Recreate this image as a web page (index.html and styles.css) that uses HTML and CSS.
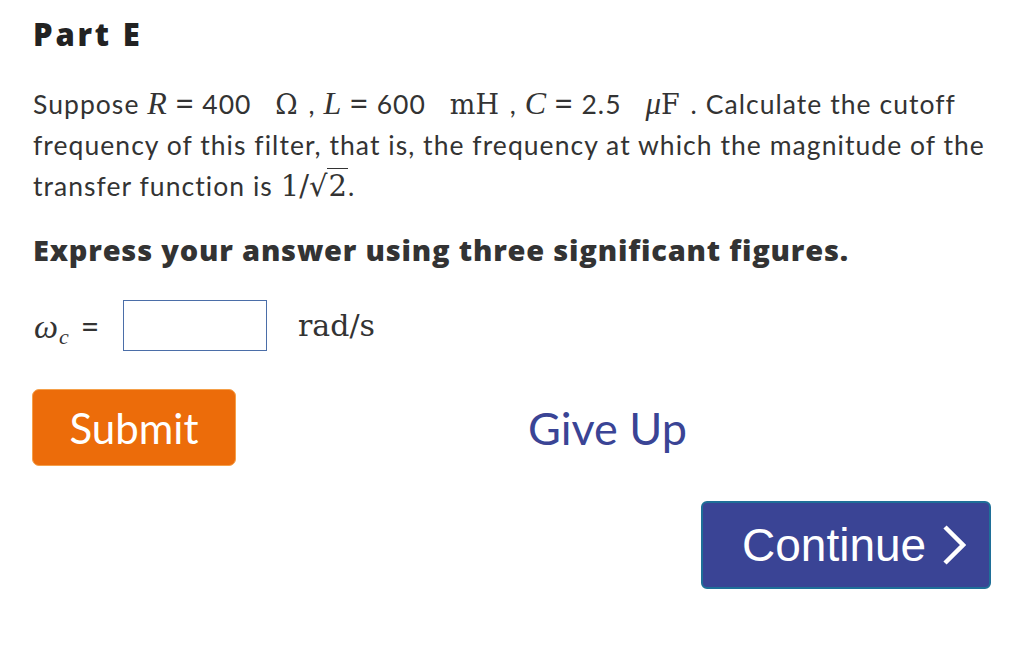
FILE: index.html
```html
<!DOCTYPE html>
<html>
<head>
<meta charset="utf-8">
<link rel="stylesheet" href="styles.css">
</head>
<body>
<main class="part">
  <h1 class="title">Part E</h1>
  <p class="prompt">Suppose <span class="mi">R</span> <span class="op">=</span> 400 <span class="mu">Ω</span> , <span class="mi">L</span> <span class="op">=</span> 600 <span class="mu">mH</span> , <span class="mi">C</span> <span class="op">=</span> 2.5 <span class="mu"><i class="mu-i">μ</i>F</span> . Calculate the cutoff frequency of this filter, that is, the frequency at which the magnitude of the transfer function is <span class="frac">1/<span class="sqrt">√<span class="rad">2</span></span></span>.</p>
  <p class="instr">Express your answer using three significant figures.</p>
  <div class="answer">
    <span class="lhs"><span class="mi omega">ω</span><sub class="mi sub">c</sub><span class="eq">=</span></span>
    <span class="input"></span>
    <span class="unit">rad/s</span>
  </div>
  <div class="actions">
    <button class="submit">Submit</button>
    <a class="giveup">Give Up</a>
  </div>
  <div class="next">
    <button class="continue">Continue <svg class="chev" width="24" height="40" viewBox="0 0 24 40"><path d="M3 2 L21 20 L3 38" fill="none" stroke="#fff" stroke-width="4.5"/></svg></button>
  </div>
</main>
</body>
</html>
```
FILE: styles.css
```css
html, body { margin: 0; padding: 0; background: #fff; }
body { font-family: Lato, "Open Sans", sans-serif; color: #333; }
.part { padding: 0 33px; }
.title { font-family: "Open Sans", Lato, sans-serif; font-weight: 800; font-size: 31px; margin: 0; padding-top: 14px; line-height: 40px; letter-spacing: 2.8px; color: #222; }
.prompt { font-size: 26.5px; line-height: 41px; margin: 29px 0 0 0; letter-spacing: 1.05px; }
.op { font-size: 34px; letter-spacing: 0; vertical-align: -2px; line-height: 1; }
.mi { font-family: "Liberation Serif", "DejaVu Serif", serif; font-style: italic; font-size: 32px; letter-spacing: 0; }
.mu { font-family: "DejaVu Serif", "Liberation Serif", serif; font-size: 27px; letter-spacing: 0; margin-left: 16px; margin-right: 3px; }
.mu-i { font-family: "Liberation Serif", serif; font-size: 31px; }
.frac { font-family: "DejaVu Serif", "Liberation Serif", serif; font-size: 29px; letter-spacing: 0; }
.rad { border-top: 1.5px solid #333; padding: 0 1px; }
.instr { font-family: "Open Sans", Lato, sans-serif; font-weight: 800; font-size: 29px; margin: 25px 0 0 0; line-height: 36px; color: #333; letter-spacing: 0.8px; }
.answer { display: flex; align-items: center; margin-top: 32px; height: 51px; }
.lhs { display: flex; align-items: baseline; width: 89px; padding-left: 1px; }
.omega { font-size: 34px; }
.sub { font-size: 22px; position: relative; top: 6px; margin-left: 1px; }
.eq { font-family: Lato, sans-serif; font-size: 32px; margin-left: 12px; }
.input { width: 142px; height: 49px; border: 1px solid #4b6ea8; }
.unit { font-family: "DejaVu Serif", "Liberation Serif", serif; margin-left: 31px; font-size: 30px; }
.actions { display: flex; align-items: center; margin-top: 38px; }
.submit { width: 204px; height: 77px; background: #ec6c0a; border: 1px solid #f5a04a; border-radius: 7px; color: #fff; font-family: Lato, sans-serif; font-size: 42px; padding: 0; margin-left: -1px; }
.giveup { margin-left: 292px; color: #3a4495; font-size: 45px; }
.next { display: flex; justify-content: flex-end; margin-top: 35px; }
.continue { display: flex; align-items: center; gap: 16px; width: 290px; height: 88px; background: #3a4495; border: 2px solid #1f6f98; border-radius: 6px; color: #fff; font-family: "Liberation Sans", Arial, sans-serif; font-size: 46px; padding: 0 0 0 39px; }
.chev { display: block; }
```
